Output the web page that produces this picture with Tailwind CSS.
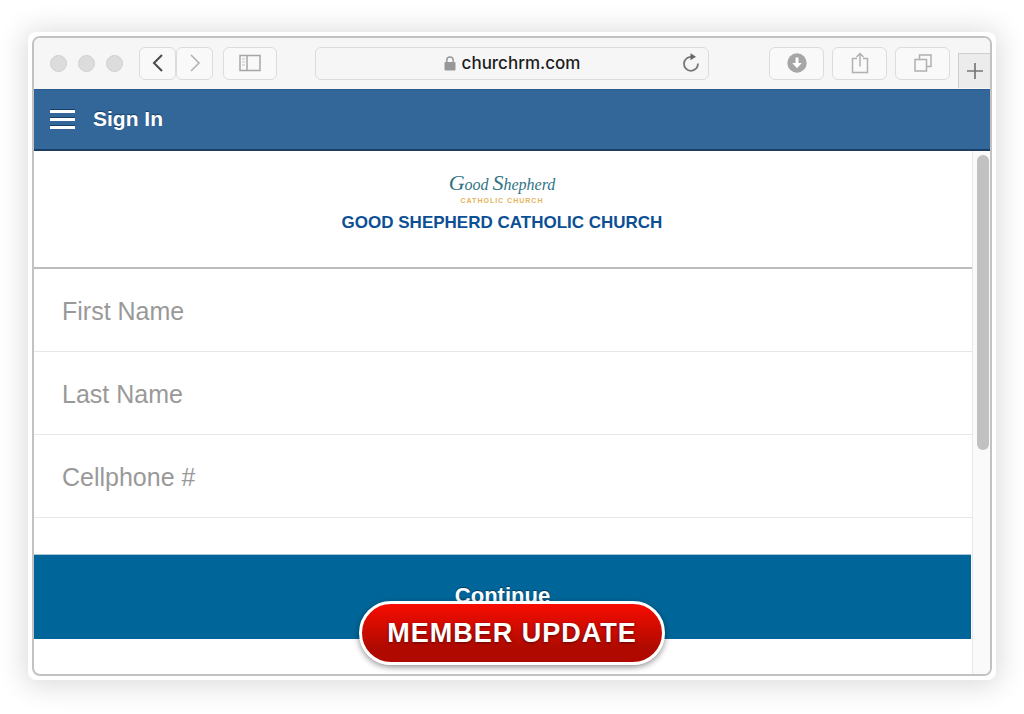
<!DOCTYPE html>
<html lang="en">
<head>
  <meta charset="UTF-8" />
  <meta name="viewport" content="width=device-width, initial-scale=1.0"/>
  <title>Sign In - Good Shepherd Catholic Church</title>
  <script src="https://cdn.jsdelivr.net/npm/@tailwindcss/browser@4"></script>
</head>
<body class="bg-white px-7 py-8 font-['Liberation_Sans',sans-serif]">

  <!-- Browser window -->
  <div class="relative rounded-lg bg-white p-1 shadow-[0_2px_28px_4px_rgba(0,0,0,0.14)]">
    <div class="overflow-hidden rounded-lg border-2 border-[#c2c2c2]">

      <!-- Toolbar -->
      <div class="flex h-[51px] items-center bg-[#f6f6f6] pb-px pl-4">
        <div class="flex gap-[11px]">
          <span class="size-[17px] rounded-full border border-[#d0d0d0] bg-[#dcdcdc]"></span>
          <span class="size-[17px] rounded-full border border-[#d0d0d0] bg-[#dcdcdc]"></span>
          <span class="size-[17px] rounded-full border border-[#d0d0d0] bg-[#dcdcdc]"></span>
        </div>

        <div class="ml-4 flex">
          <button aria-label="Back" class="flex h-[33px] w-[37px] items-center justify-center rounded-md border border-[#dcdcdc] bg-[#f9f9f9]">
            <svg class="h-[18px] w-3" viewBox="0 0 12 18" fill="none" stroke="#4a4a4a" stroke-width="2"><path d="M10 1 2 9l8 8"/></svg>
          </button>
          <button aria-label="Forward" class="flex h-[33px] w-[37px] items-center justify-center rounded-md border border-[#dcdcdc] bg-[#f9f9f9]">
            <svg class="h-[18px] w-3" viewBox="0 0 12 18" fill="none" stroke="#b4b4b4" stroke-width="1.6"><path d="M2 1l8 8-8 8"/></svg>
          </button>
        </div>

        <button aria-label="Sidebar" class="ml-[10px] flex h-[33px] w-[54px] items-center justify-center rounded-md border border-[#dcdcdc] bg-[#f9f9f9]">
          <svg class="h-[18px] w-[22px]" viewBox="0 0 22 18" fill="none" stroke="#a6a6a6" stroke-width="1.5"><path d="M1 1.5h20v15H1zM8 1.5v15"/><path d="M3 5h3M3 8h3M3 11h3" stroke="#c4c4c4" stroke-width="1.2"/></svg>
        </button>

        <div class="mr-[60px] ml-[38px] grid h-[33px] flex-1 grid-cols-[1fr_auto_1fr] items-center rounded-md border border-[#dcdcdc] bg-[#f6f6f6] px-2">
          <span></span>
          <label class="flex items-center gap-1.5">
            <svg class="h-[15px] w-3" viewBox="0 0 12 15"><rect x="0.5" y="6" width="11" height="8.5" rx="1" fill="#989898"/><path d="M2.8 7V4.2a3.2 3.2 0 0 1 6.4 0V7" fill="none" stroke="#989898" stroke-width="1.5"/></svg>
            <input aria-label="Address" type="text" value="churchrm.com" class="field-sizing-content bg-transparent font-['Inter',sans-serif] text-[17px] leading-6 font-medium text-[#1c1c1c] outline-none" />
          </label>
          <button aria-label="Reload" class="justify-self-end">
            <svg class="h-5 w-[18px]" viewBox="0 0 18 20" fill="none" stroke="#777" stroke-width="1.8"><path d="M9.5 3.8A7 7 0 1 0 16 10.6"/><path d="M8.5.3 14 3.8 8.5 7.3z" fill="#666" stroke="none"/></svg>
          </button>
        </div>

        <div class="flex gap-2">
          <button aria-label="Downloads" class="flex h-[33px] w-[55px] items-center justify-center rounded-md border border-[#dcdcdc] bg-[#f9f9f9]">
            <svg class="size-5" viewBox="0 0 20 20"><circle cx="10" cy="10" r="9.7" fill="#a6a6a6"/><path d="M8.5 4.5h3v5.5h3.3L10 15.2 5.2 10h3.3z" fill="#fff"/></svg>
          </button>
          <button aria-label="Share" class="flex h-[33px] w-[55px] items-center justify-center rounded-md border border-[#dcdcdc] bg-[#f9f9f9]">
            <svg class="h-[22px] w-[18px]" viewBox="0 0 18 22" fill="none" stroke="#b0b0b0" stroke-width="1.5"><path d="M6 6.5H1.5v14h15v-14H12M9 14.5V1.5M5.5 5 9 1.5 12.5 5"/></svg>
          </button>
          <button aria-label="Tabs" class="flex h-[33px] w-[55px] items-center justify-center rounded-md border border-[#dcdcdc] bg-[#f9f9f9]">
            <svg class="size-[18px]" viewBox="0 0 18 18" fill="none" stroke="#b0b0b0" stroke-width="1.5"><rect x="1" y="5.5" width="11.5" height="11.5"/><path d="M5.5 5V1H17v11.5h-4"/></svg>
          </button>
        </div>

        <button aria-label="New tab" class="ml-2 flex h-[35px] w-8 items-center justify-center self-end border-t border-l border-[#cfcfcf] bg-[#ececec]">
          <svg class="size-4" viewBox="0 0 16 16" stroke="#777" stroke-width="1.7"><path d="M8 0v16M0 8h16"/></svg>
        </button>
      </div>

      <!-- Page header -->
      <header class="flex h-[62px] items-center gap-[18px] border-t border-b-2 border-t-[#285b8e] border-b-[#1d3d62] bg-[#336699] pl-4">
        <button aria-label="Menu" class="flex w-[25px] flex-col gap-[5px]">
          <span class="h-[3px] w-full bg-white shadow-[0_-1px_0_#163f68]"></span>
          <span class="h-[3px] w-full bg-white shadow-[0_-1px_0_#163f68]"></span>
          <span class="h-[3px] w-full bg-white shadow-[0_-1px_0_#163f68]"></span>
        </button>
        <h1 class="pb-0.5 text-[21px] leading-7 font-bold text-white text-shadow-[0_-1px_1px_#163f68]">Sign In</h1>
      </header>

      <div class="flex">
        <main class="flex-1">
          <!-- Church logo -->
          <div class="flex h-[118px] flex-col items-center border-b-2 border-[#bdbdbd] pt-5 pr-0.5">
            <div class="flex flex-col items-center">
              <span class="font-['Liberation_Serif',serif] text-base leading-6 text-[#2f7484] italic"><span class="text-[22px]">G</span>ood <span class="text-[22px]">S</span>hepherd</span>
              <span class="text-[7px] leading-2 font-bold tracking-[1px] text-[#e3b45c]">CATHOLIC CHURCH</span>
            </div>
            <h2 class="mt-2 text-[17px] leading-5 font-bold text-[#0b4f94]">GOOD SHEPHERD CATHOLIC CHURCH</h2>
          </div>

          <form>
            <input aria-label="First Name" type="text" placeholder="First Name" class="block h-[83px] w-full border-b border-[#e6e6e6] px-7 pt-0.5 text-[25px] outline-none placeholder:text-[#999]" />
            <input aria-label="Last Name" type="text" placeholder="Last Name" class="block h-[83px] w-full border-b border-[#e6e6e6] px-7 pt-0.5 text-[25px] outline-none placeholder:text-[#999]" />
            <input aria-label="Cellphone #" type="tel" placeholder="Cellphone #" class="block h-[83px] w-full border-b border-[#e6e6e6] px-7 pt-0.5 text-[25px] outline-none placeholder:text-[#999]" />
            <div class="pt-9 pr-px pb-[35px]">
              <button type="button" class="block h-[85px] w-full border-t border-[#a9c6d9] bg-[#006699] pb-1 text-[22px] font-bold text-white text-shadow-[0_-1px_1px_#00385c]">Continue</button>
            </div>
          </form>
        </main>

        <!-- Scrollbar -->
        <div class="w-[18px] border-l border-[#e8e8e8] bg-[#fafafa] pt-1 pl-1">
          <div class="h-[295px] w-3 rounded-full bg-[#c1c1c1]"></div>
        </div>
      </div>
    </div>

    <!-- Member update badge -->
    <a href="#" class="absolute bottom-[15px] left-1/2 flex h-16 w-[306px] -translate-x-1/2 items-center justify-center rounded-full border-3 border-white bg-linear-to-b from-[#f80c00] to-[#b00a00] to-75% text-[27px] font-bold tracking-[1px] text-white shadow-[0_2px_6px_rgba(0,0,0,0.45)] text-shadow-[0_1px_3px_rgba(0,0,0,0.5)]">MEMBER UPDATE</a>
  </div>

</body>
</html>
